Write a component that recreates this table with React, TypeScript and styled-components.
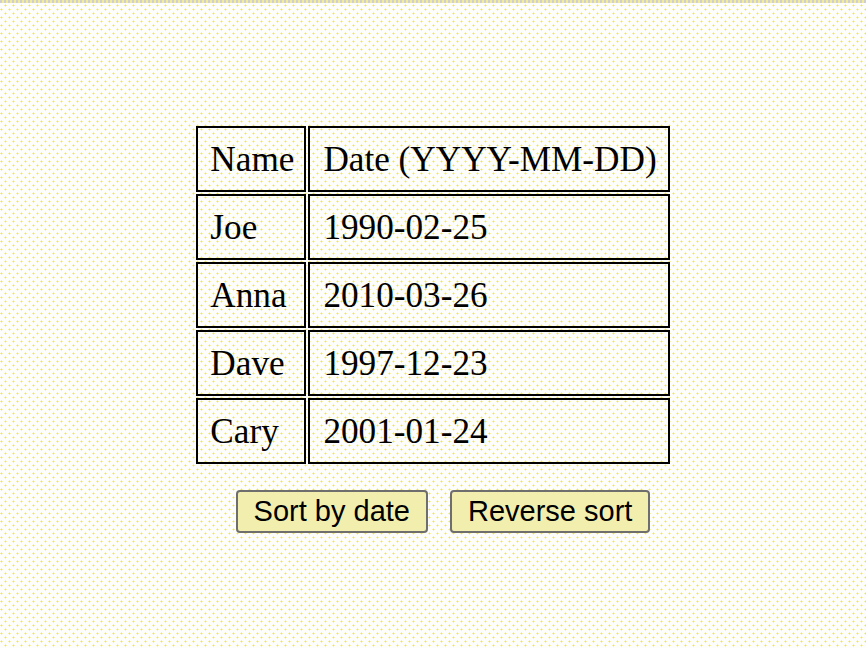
import React, { useState } from "react";
import styled, { createGlobalStyle } from "styled-components";

const GlobalStyle = createGlobalStyle`
  html, body {
    margin: 0;
    padding: 0;
  }
  body {
    background-color: #fdfdfb;
    background-image:
      radial-gradient(circle at 1.5px 1.5px, #efe54c 0.8px, transparent 1.2px),
      radial-gradient(circle at 5.5px 5.5px, #efe54c 0.8px, transparent 1.2px);
    background-size: 8px 8px;
    font-family: "Liberation Serif", "Times New Roman", serif;
  }
`;

const Page = styled.div`
  min-height: 648px;
  display: flex;
  flex-direction: column;
  align-items: center;
`;

const Fringe = styled.div`
  align-self: stretch;
  height: 3px;
  background-color: #e2e2cc;
  background-image: linear-gradient(90deg, #cfcfcf 50%, #f2ec9a 50%);
  background-size: 4px 3px;
`;

const Table = styled.table`
  margin-top: 121px;
  border-collapse: separate;
  border-spacing: 2px;
  font-family: "Liberation Serif", "Times New Roman", serif;
  font-size: 35.2px;
  color: #000;
`;

const Cell = styled.td<{ $wide?: boolean }>`
  border: 2px solid #000;
  padding-top: 12px;
  padding-bottom: 10px;
  padding-left: ${(p) => (p.$wide ? "13px" : "12px")};
  padding-right: ${(p) => (p.$wide ? "11px" : "10px")};
  text-align: left;
  font-weight: normal;
  line-height: 40px;
  white-space: nowrap;
`;

const HeadCell = styled(Cell).attrs({ as: "th" })``;

const ButtonRow = styled.div`
  display: flex;
  gap: 22px;
  margin-top: 24px;
  padding-left: 20px;
`;

const Button = styled.button`
  font-family: "Liberation Sans", Arial, sans-serif;
  font-size: 29px;
  line-height: 33px;
  color: #000;
  background: #f2eeae;
  border: 2px solid #6e6e6e;
  border-radius: 4px;
  padding: 3px 16px;
  cursor: pointer;
`;

type Row = { name: string; date: string };

const initial: Row[] = [
  { name: "Joe", date: "1990-02-25" },
  { name: "Anna", date: "2010-03-26" },
  { name: "Dave", date: "1997-12-23" },
  { name: "Cary", date: "2001-01-24" },
];

export default function App() {
  const [rows, setRows] = useState<Row[]>(initial);

  const sortByDate = () =>
    setRows([...rows].sort((a, b) => a.date.localeCompare(b.date)));
  const reverse = () => setRows([...rows].reverse());

  return (
    <>
      <GlobalStyle />
      <Page>
        <Fringe />
        <Table>
          <thead>
            <tr>
              <HeadCell>Name</HeadCell>
              <HeadCell $wide>Date (YYYY-MM-DD)</HeadCell>
            </tr>
          </thead>
          <tbody>
            {rows.map((r) => (
              <tr key={r.name}>
                <Cell>{r.name}</Cell>
                <Cell $wide>{r.date}</Cell>
              </tr>
            ))}
          </tbody>
        </Table>
        <ButtonRow>
          <Button onClick={sortByDate}>Sort by date</Button>
          <Button onClick={reverse}>Reverse sort</Button>
        </ButtonRow>
      </Page>
    </>
  );
}
